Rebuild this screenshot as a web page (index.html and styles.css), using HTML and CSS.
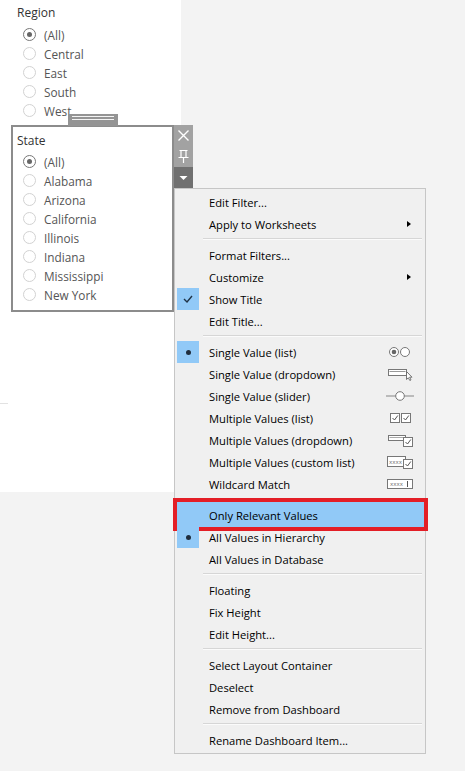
FILE: index.html
```html
<!DOCTYPE html>
<html>
<head>
<meta charset="utf-8">
<link rel="stylesheet" href="styles.css">
</head>
<body>
<div class="canvas">
  <div class="sheet">
    <div class="filter region">
      <div class="ftitle">Region</div>
      <ul class="radios">
        <li><span class="radio on"></span>(All)</li>
        <li><span class="radio"></span>Central</li>
        <li><span class="radio"></span>East</li>
        <li><span class="radio"></span>South</li>
        <li><span class="radio"></span>West</li>
      </ul>
    </div>
    <div class="stray"></div>
  </div>

  <div class="float-filter">
    <div class="handle"><span></span><span></span></div>
    <div class="ftitle">State</div>
    <ul class="radios">
      <li><span class="radio on"></span>(All)</li>
      <li><span class="radio"></span>Alabama</li>
      <li><span class="radio"></span>Arizona</li>
      <li><span class="radio"></span>California</li>
      <li><span class="radio"></span>Illinois</li>
      <li><span class="radio"></span>Indiana</li>
      <li><span class="radio"></span>Mississippi</li>
      <li><span class="radio"></span>New York</li>
    </ul>
    <div class="tools">
      <div class="tool">
        <svg width="13" height="13" viewBox="0 0 13 13"><path d="M1.5 1.5 L11.5 11.5 M11.5 1.5 L1.5 11.5" stroke="#fff" stroke-width="1.4" fill="none"/></svg>
      </div>
      <div class="tool">
        <svg width="13" height="15" viewBox="0 0 13 15"><path d="M2.5 1.5 H10.5 M4 1.5 V8 M9 1.5 V8 M1.5 8.5 H11.5 M6.5 8.5 V14" stroke="#fff" stroke-width="1.2" fill="none"/></svg>
      </div>
      <div class="tool dark">
        <svg width="9" height="6" viewBox="0 0 9 6"><path d="M0.5 1 H8.5 L4.5 5 Z" fill="#fff"/></svg>
      </div>
    </div>
  </div>

  <div class="menu">
    <div class="item"><span class="gut"></span><span class="lbl">Edit Filter...</span></div>
    <div class="item"><span class="gut"></span><span class="lbl">Apply to Worksheets</span><span class="sub"></span></div>
    <div class="sep"></div>
    <div class="item"><span class="gut"></span><span class="lbl">Format Filters...</span></div>
    <div class="item"><span class="gut"></span><span class="lbl">Customize</span><span class="sub"></span></div>
    <div class="item"><span class="gut sel"><svg width="10" height="8" viewBox="0 0 10 8"><path d="M1 4 L4 7 L9 1" stroke="#1f3347" stroke-width="1.4" fill="none"/></svg></span><span class="lbl">Show Title</span></div>
    <div class="item"><span class="gut"></span><span class="lbl">Edit Title...</span></div>
    <div class="sep"></div>
    <div class="item"><span class="gut sel"><span class="dot"></span></span><span class="lbl">Single Value (list)</span>
      <svg class="ico" width="28" height="14" viewBox="0 0 28 14"><circle cx="8" cy="7" r="4.5" fill="#fff" stroke="#777"/><circle cx="8" cy="7" r="2.3" fill="#666"/><circle cx="19" cy="7" r="4.5" fill="#fff" stroke="#777"/></svg>
    </div>
    <div class="item"><span class="gut"></span><span class="lbl">Single Value (dropdown)</span>
      <svg class="ico" width="28" height="14" viewBox="0 0 28 14"><rect x="2.5" y="2.5" width="18" height="6" fill="#fff" stroke="#777"/><path d="M3.5 4.5 H19.5" stroke="#999"/><path d="M20.5 4.5 V12.5 L22.3 10.8 L23.8 13.5 L25 12.9 L23.6 10.2 L26 10.2 Z" fill="#fff" stroke="#666" stroke-width="0.9"/></svg>
    </div>
    <div class="item"><span class="gut"></span><span class="lbl">Single Value (slider)</span>
      <svg class="ico" width="28" height="14" viewBox="0 0 28 14"><path d="M0 7 H28" stroke="#bbb" stroke-width="2"/><circle cx="14" cy="7" r="4.3" fill="#fff" stroke="#777"/></svg>
    </div>
    <div class="item"><span class="gut"></span><span class="lbl">Multiple Values (list)</span>
      <svg class="ico" width="28" height="14" viewBox="0 0 28 14"><rect x="4.5" y="2.5" width="9" height="9" fill="#fff" stroke="#777"/><path d="M6.5 7 L8.5 9 L11.8 4.5" stroke="#555" fill="none"/><rect x="15.5" y="2.5" width="9" height="9" fill="#fff" stroke="#777"/><path d="M17.5 7 L19.5 9 L22.8 4.5" stroke="#555" fill="none"/></svg>
    </div>
    <div class="item"><span class="gut"></span><span class="lbl">Multiple Values (dropdown)</span>
      <svg class="ico" width="28" height="14" viewBox="0 0 28 14"><rect x="2.5" y="2.5" width="17" height="5" fill="#fff" stroke="#777"/><path d="M3.5 4.5 H18" stroke="#aaa"/><rect x="17.5" y="4.5" width="9" height="9" fill="#fff" stroke="#777"/><path d="M19.5 9 L21.5 11 L24.8 6.5" stroke="#555" fill="none"/></svg>
    </div>
    <div class="item"><span class="gut"></span><span class="lbl">Multiple Values (custom list)</span>
      <svg class="ico" width="28" height="14" viewBox="0 0 28 14"><rect x="1.5" y="1.5" width="18" height="10" fill="#fff" stroke="#777"/><text x="3" y="8.6" font-size="5.5" font-family="DejaVu Sans, sans-serif" fill="#777">xxxx</text><rect x="17.5" y="4.5" width="9" height="9" fill="#fff" stroke="#777"/><path d="M19.5 9 L21.5 11 L24.8 6.5" stroke="#555" fill="none"/></svg>
    </div>
    <div class="item"><span class="gut"></span><span class="lbl">Wildcard Match</span>
      <svg class="ico" width="28" height="14" viewBox="0 0 28 14"><rect x="1.5" y="2.5" width="25" height="9" fill="#fff" stroke="#777"/><text x="4" y="9.2" font-size="5.5" font-family="DejaVu Sans, sans-serif" fill="#777">xxxx</text><path d="M21.5 4 V10" stroke="#555"/></svg>
    </div>
    <div class="sep"></div>
    <div class="item hot"><span class="gut"></span><span class="lbl">Only Relevant Values</span></div>
    <div class="item"><span class="gut sel"><span class="dot"></span></span><span class="lbl">All Values in Hierarchy</span></div>
    <div class="item"><span class="gut"></span><span class="lbl">All Values in Database</span></div>
    <div class="sep"></div>
    <div class="item"><span class="gut"></span><span class="lbl">Floating</span></div>
    <div class="item"><span class="gut"></span><span class="lbl">Fix Height</span></div>
    <div class="item"><span class="gut"></span><span class="lbl">Edit Height...</span></div>
    <div class="sep"></div>
    <div class="item"><span class="gut"></span><span class="lbl">Select Layout Container</span></div>
    <div class="item"><span class="gut"></span><span class="lbl">Deselect</span></div>
    <div class="item"><span class="gut"></span><span class="lbl">Remove from Dashboard</span></div>
    <div class="sep"></div>
    <div class="item"><span class="gut"></span><span class="lbl">Rename Dashboard Item...</span></div>
  </div>
</div>
</body>
</html>
```

FILE: styles.css
```css
html, body {
  margin: 0;
  padding: 0;
}
body {
  background: #f3f3f3;
  font-family: "Open Sans", "Noto Sans", sans-serif;
  width: 465px;
  height: 771px;
  overflow: hidden;
}
.canvas {
  position: relative;
  width: 465px;
  height: 771px;
}
.sheet {
  width: 181px;
  height: 492px;
  background: #ffffff;
}
.filter.region {
  padding: 4px 0 0 17px;
}
.ftitle {
  height: 18px;
  line-height: 18px;
  font-size: 12px;
  color: #333;
}
.radios {
  list-style: none;
  margin: 3px 0 0 0;
  padding: 0;
}
.radios li {
  height: 19px;
  display: flex;
  align-items: center;
  padding-left: 6px;
  font-size: 11.8px;
  color: #555;
}
.radio {
  width: 13px;
  height: 13px;
  box-sizing: border-box;
  border: 1px solid #d2d2d2;
  border-radius: 50%;
  margin-right: 8px;
  flex: none;
  position: relative;
  background: #fff;
}
.radio.on {
  border-color: #777;
}
.radio.on::after {
  content: "";
  position: absolute;
  left: 3px;
  top: 3px;
  width: 5px;
  height: 5px;
  border-radius: 50%;
  background: #666;
}
.stray {
  width: 8px;
  height: 1px;
  background: #e2e2e2;
  margin-top: 283px;
}

.float-filter {
  position: absolute;
  left: 11px;
  top: 125px;
  width: 163px;
  height: 187px;
  box-sizing: border-box;
  border: 2px solid #8c8c8c;
  background: #fff;
  padding: 5px 0 0 4px;
}
.float-filter .radios {
  margin-top: 2px;
}
.handle {
  position: absolute;
  left: 55px;
  top: -13px;
  width: 50px;
  height: 12px;
  background: #949494;
  display: flex;
  flex-direction: column;
  align-items: center;
  padding-top: 2px;
  box-sizing: border-box;
  gap: 2px;
}
.handle span {
  width: 42px;
  height: 1px;
  background: #f4f4f4;
}
.tools {
  position: absolute;
  left: 161px;
  top: -2px;
  width: 19px;
  display: flex;
  flex-direction: column;
}
.tool {
  height: 21px;
  background: #a2a2a2;
  display: flex;
  align-items: center;
  justify-content: center;
}
.tool.dark {
  background: #707070;
}

.menu {
  position: absolute;
  left: 174px;
  top: 188px;
  width: 252px;
  box-sizing: border-box;
  border: 1px solid #c6c6c6;
  background: #f0f0f0;
  padding: 2px 2px 2px 2px;
  font-family: "Open Sans", "Noto Sans", sans-serif;
  font-size: 11.2px;
  color: #000;
}
.item {
  height: 22px;
  display: flex;
  align-items: center;
  position: relative;
  z-index: 0;
}
.gut {
  width: 22px;
  height: 22px;
  flex: none;
  display: flex;
  align-items: center;
  justify-content: center;
}
.gut.sel {
  background: #91c9f7;
}
.dot {
  width: 5px;
  height: 5px;
  border-radius: 50%;
  background: #1f2d3d;
}
.lbl {
  margin-left: 10px;
  flex: 1;
  white-space: nowrap;
}
.sub {
  width: 0;
  height: 0;
  border-left: 4px solid #000;
  border-top: 3.5px solid transparent;
  border-bottom: 3.5px solid transparent;
  margin-right: 12px;
}
.ico {
  flex: none;
  margin-right: 9px;
}
.sep {
  height: 1px;
  background: #d6d6d6;
  border-bottom: 1px solid #fbfbfb;
  margin: 3px 1px 4px 26px;
}
.item.hot::before {
  content: "";
  position: absolute;
  left: -4px;
  right: -5px;
  top: -6px;
  bottom: -5px;
  background: #91c9f7;
  border: 4px solid #e31e26;
  z-index: -1;
}
```
